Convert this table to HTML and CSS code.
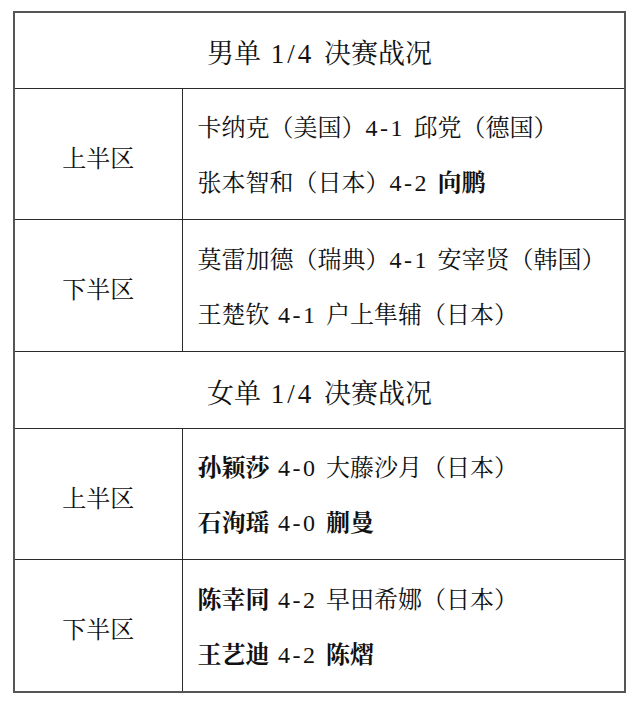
FILE: index.html
```html
<!DOCTYPE html>
<html lang="zh-CN">
<head>
<meta charset="utf-8">
<title>1/4 决赛战况</title>
<link rel="stylesheet" href="styles.css">
</head>
<body>
<table class="results">
  <colgroup><col class="col-zone"><col class="col-match"></colgroup>
  <tr class="head"><th colspan="2">男单<span class="num"> 1/4 </span>决赛战况</th></tr>
  <tr class="row">
    <td class="zone">上半区</td>
    <td class="match">
      <div class="line">卡纳克（美国）<span class="num">4-1 </span>邱党（德国）</div>
      <div class="line">张本智和（日本）<span class="num">4-2 </span><b>向鹏</b></div>
    </td>
  </tr>
  <tr class="row tall">
    <td class="zone">下半区</td>
    <td class="match">
      <div class="line">莫雷加德（瑞典）<span class="num">4-1 </span>安宰贤（韩国）</div>
      <div class="line">王楚钦<span class="num"> 4-1 </span>户上隼辅（日本）</div>
    </td>
  </tr>
  <tr class="head second"><th colspan="2">女单<span class="num"> 1/4 </span>决赛战况</th></tr>
  <tr class="row">
    <td class="zone">上半区</td>
    <td class="match">
      <div class="line"><b>孙颖莎</b><span class="num"> 4-0 </span>大藤沙月（日本）</div>
      <div class="line"><b>石洵瑶</b><span class="num"> 4-0 </span><b>蒯曼</b></div>
    </td>
  </tr>
  <tr class="row tall">
    <td class="zone">下半区</td>
    <td class="match">
      <div class="line"><b>陈幸同</b><span class="num"> 4-2 </span>早田希娜（日本）</div>
      <div class="line"><b>王艺迪</b><span class="num"> 4-2 </span><b>陈熠</b></div>
    </td>
  </tr>
</table>
</body>
</html>
```
FILE: styles.css
```css
html, body {
  margin: 0;
  padding: 0;
  background: #ffffff;
}
body {
  padding: 11px 0 0 13px;
  font-family: "Liberation Serif", "Noto Serif CJK SC", "Noto Sans CJK SC", serif;
  color: #111111;
}
.results {
  border-collapse: collapse;
  width: 613px;
  table-layout: fixed;
  border: 2px solid #555555;
}
.col-zone { width: 168px; }
.results th,
.results td {
  border: 1px solid #2a2a2a;
  padding: 0;
}
.head th {
  height: 73px;
  font-size: 27px;
  font-weight: normal;
  text-align: center;
  vertical-align: middle;
  padding-top: 2px;
}
.head.second th {
  height: 74px;
}
.head .num {
  letter-spacing: 3px;
}
.row td {
  height: 126px;
  vertical-align: middle;
}
.row.tall td {
  height: 127px;
}
.zone {
  text-align: center;
  font-size: 24px;
  padding-top: 4px !important;
}
.match {
  padding: 4px 0 0 15px !important;
  font-size: 24px;
}
.line {
  line-height: 55px;
  white-space: nowrap;
}
.match .num {
  letter-spacing: 2.5px;
}
.match b {
  font-weight: bold;
}
```
